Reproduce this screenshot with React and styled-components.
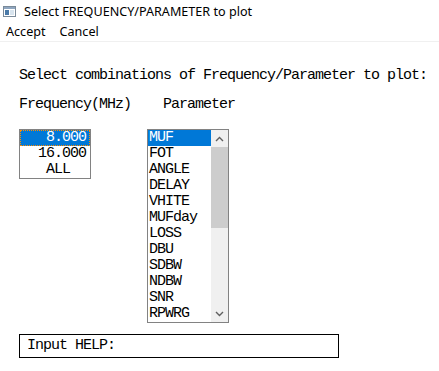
import React from "react"
import styled, { createGlobalStyle } from "styled-components"

const Global = createGlobalStyle`
  html, body { margin: 0; padding: 0; background: #fff; }
  body { width: 439px; height: 371px; overflow: hidden; }
`

const Window = styled.div`
  width: 439px;
  height: 371px;
  background: #fff;
  display: flex;
  flex-direction: column;
  font-family: "Liberation Mono", monospace;
`
const TitleBar = styled.div`
  height: 22px;
  display: flex;
  align-items: center;
  padding-left: 3px;
  gap: 8px;
  font-family: "Noto Sans", "Liberation Sans", sans-serif;
  font-size: 12.6px;
  color: #000;
`
const MenuBar = styled.div`
  height: 19px;
  display: flex;
  align-items: center;
  gap: 14px;
  padding-left: 6px;
  font-family: "Noto Sans", "Liberation Sans", sans-serif;
  font-size: 12.6px;
  border-bottom: 1px solid #f0f0f0;
`
const Body = styled.div`
  padding: 26px 0 0 19px;
  display: flex;
  flex-direction: column;
`
const Mono = styled.div`
  font-size: 15px;
  letter-spacing: -1px;
  line-height: 16px;
  height: 16px;
  white-space: pre;
  color: #000;
`
const Heading = styled(Mono)`
  margin-bottom: 13px;
`
const Lists = styled.div`
  display: flex;
  align-items: flex-start;
  margin-top: 16px;
`
const ListBox = styled.div`
  box-sizing: border-box;
  width: ${p => p.$w}px;
  height: ${p => p.$h}px;
  border: 1px solid #828282;
  display: flex;
  margin-right: ${p => p.$mr || 0}px;
`
const Items = styled.div`
  flex: 1;
  display: flex;
  flex-direction: column;
`
const Item = styled(Mono)`
  box-sizing: border-box;
  padding-left: ${p => p.$pl}px;
  background: ${p => (p.$sel ? "#0078d7" : "transparent")};
  color: ${p => (p.$sel ? "#fff" : "#000")};
  outline: ${p => (p.$focus ? "1px dotted #ff8c00" : "none")};
  outline-offset: -1px;
`
const ScrollBar = styled.div`
  width: 17px;
  background: #f0f0f0;
  display: flex;
  flex-direction: column;
  align-items: center;
`
const Arrow = styled.div`
  height: 17px;
  width: 17px;
  display: flex;
  align-items: center;
  justify-content: center;
`
const Thumb = styled.div`
  width: 17px;
  height: 81px;
  background: #cdcdcd;
`
const Track = styled.div`
  flex: 1;
`
const HelpBox = styled.div`
  box-sizing: border-box;
  width: 320px;
  height: 24px;
  border: 1px solid #000;
  margin-top: 11px;
  padding: 3px 0 0 7px;
`

const Chevron = ({ up }) => (
  <svg width="9" height="6" viewBox="0 0 9 6">
    <path
      d={up ? "M1 5 L4.5 1.5 L8 5" : "M1 1 L4.5 4.5 L8 1"}
      fill="none"
      stroke="#606060"
      strokeWidth="1.4"
    />
  </svg>
)

const AppIcon = () => (
  <svg width="13" height="11" viewBox="0 0 13 11">
    <rect x="0.5" y="0.5" width="12" height="10" fill="#fff" stroke="#7a8a99" />
    <rect x="1" y="1" width="11" height="2" fill="#8fa6c0" />
    <rect x="2" y="4" width="4" height="5" fill="#4a7aa8" />
    <rect x="7" y="4" width="4" height="5" fill="#d8e4ee" />
  </svg>
)

const freqs = [" 8.000", "16.000", " ALL"]
const params = ["MUF", "FOT", "ANGLE", "DELAY", "VHITE", "MUFday", "LOSS", "DBU", "SDBW", "NDBW", "SNR", "RPWRG"]

export default function App() {
  return (
    <>
      <Global />
      <Window>
        <TitleBar>
          <AppIcon />
          <span>Select FREQUENCY/PARAMETER to plot</span>
        </TitleBar>
        <MenuBar>
          <span>Accept</span>
          <span>Cancel</span>
        </MenuBar>
        <Body>
          <Heading>Select combinations of Frequency/Parameter to plot:</Heading>
          <Mono>Frequency(MHz)    Parameter</Mono>
          <Lists>
            <ListBox $w={72} $h={50} $mr={56}>
              <Items>
                {freqs.map((f, i) => (
                  <Item key={f} $pl={18} $sel={i === 0} $focus={i === 0}>{f}</Item>
                ))}
              </Items>
            </ListBox>
            <ListBox $w={82} $h={194}>
              <Items>
                {params.map((p, i) => (
                  <Item key={p} $pl={1} $sel={i === 0}>{p}</Item>
                ))}
              </Items>
              <ScrollBar>
                <Arrow><Chevron up /></Arrow>
                <Thumb />
                <Track />
                <Arrow><Chevron /></Arrow>
              </ScrollBar>
            </ListBox>
          </Lists>
          <HelpBox>
            <Mono>Input HELP:</Mono>
          </HelpBox>
        </Body>
      </Window>
    </>
  )
}
